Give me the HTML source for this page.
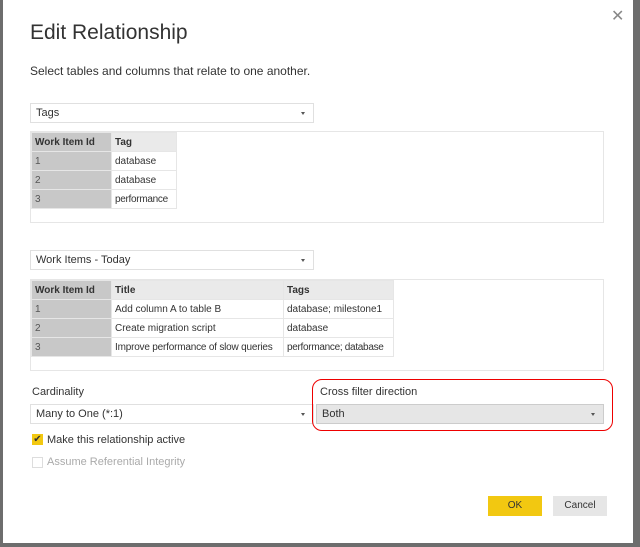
<!DOCTYPE html>
<html><head><style>
body{margin:0;width:640px;height:547px;background:#6d6d6d;font-family:"Liberation Sans",sans-serif;color:#333;position:relative;overflow:hidden}
.dlg{position:absolute;left:3px;top:0;width:630px;height:543px;background:#fff}
.a{position:absolute}
.dd{position:absolute;border:1px solid #e0e0e0;background:#fff;font-size:11px;line-height:18px;padding-left:5px;box-sizing:border-box;height:20px}
.dd:after{content:"";position:absolute;right:8px;top:8px;border:2.5px solid transparent;border-top:3px solid #555}
.tb{position:absolute;border:1px solid #e6e6e6;background:#fff}
table{border-collapse:collapse;font-size:10px;table-layout:fixed}
td{height:18px;padding:0 3px;border:1px solid #e6e6e6;white-space:nowrap;overflow:hidden}
td.k{background:#c8c8c8;color:#555}
tr.h td{background:#eaeaea;font-weight:bold;color:#333}
tr.h td.k{background:#c8c8c8}
</style></head><body>
<div class="dlg"></div>
<div class="a" style="left:611px;top:6px;font-size:16px;color:#888">✕</div>
<div class="a" style="left:30px;top:21px;font-size:21px;color:#333">Edit Relationship</div>
<div class="a" style="left:30px;top:64px;font-size:12px">Select tables and columns that relate to one another.</div>
<div class="dd" style="left:30px;top:103px;width:284px">Tags</div>
<div class="tb" style="left:30px;top:131px;width:572px;height:90px">
<table style="width:145px"><col style="width:80px"><col style="width:65px"><tr class="h"><td class="k">Work Item Id</td><td>Tag</td></tr>
<tr><td class="k">1</td><td>database</td></tr><tr><td class="k">2</td><td>database</td></tr><tr><td class="k">3</td><td style="letter-spacing:-0.3px">performance</td></tr></table></div>
<div class="dd" style="left:30px;top:250px;width:284px">Work Items - Today</div>
<div class="tb" style="left:30px;top:279px;width:572px;height:90px">
<table style="width:362px"><col style="width:80px"><col style="width:172px"><col style="width:110px"><tr class="h"><td class="k">Work Item Id</td><td>Title</td><td>Tags</td></tr>
<tr><td class="k">1</td><td>Add column A to table B</td><td>database; milestone1</td></tr>
<tr><td class="k">2</td><td>Create migration script</td><td>database</td></tr>
<tr><td class="k">3</td><td style="letter-spacing:-0.2px">Improve performance of slow queries</td><td style="letter-spacing:-0.3px">performance; database</td></tr></table></div>
<div class="a" style="left:32px;top:386px;font-size:11px">Cardinality</div>
<div class="dd" style="left:30px;top:404px;width:284px">Many to One (*:1)</div>
<div class="a" style="left:312px;top:379px;width:299px;height:50px;border:1px solid #e00;border-radius:10px"></div>
<div class="a" style="left:320px;top:386px;font-size:11px">Cross filter direction</div>
<div class="dd" style="left:316px;top:404px;width:288px;background:#e6e6e6;border-color:#ccc">Both</div>
<div class="a" style="left:32px;top:434px;width:11px;height:11px;background:#f2c811;font-size:10px;line-height:11px;text-align:center;color:#333">✔</div>
<div class="a" style="left:47px;top:434px;font-size:11px">Make this relationship active</div>
<div class="a" style="left:32px;top:457px;width:9px;height:9px;border:1px solid #ddd"></div>
<div class="a" style="left:47px;top:456px;font-size:11px;color:#aaa">Assume Referential Integrity</div>
<div class="a" style="left:488px;top:496px;width:54px;height:20px;background:#f2c811;font-size:10px;line-height:20px;text-align:center">OK</div>
<div class="a" style="left:553px;top:496px;width:54px;height:20px;background:#e6e6e6;font-size:10px;line-height:20px;text-align:center">Cancel</div>
</body></html>
